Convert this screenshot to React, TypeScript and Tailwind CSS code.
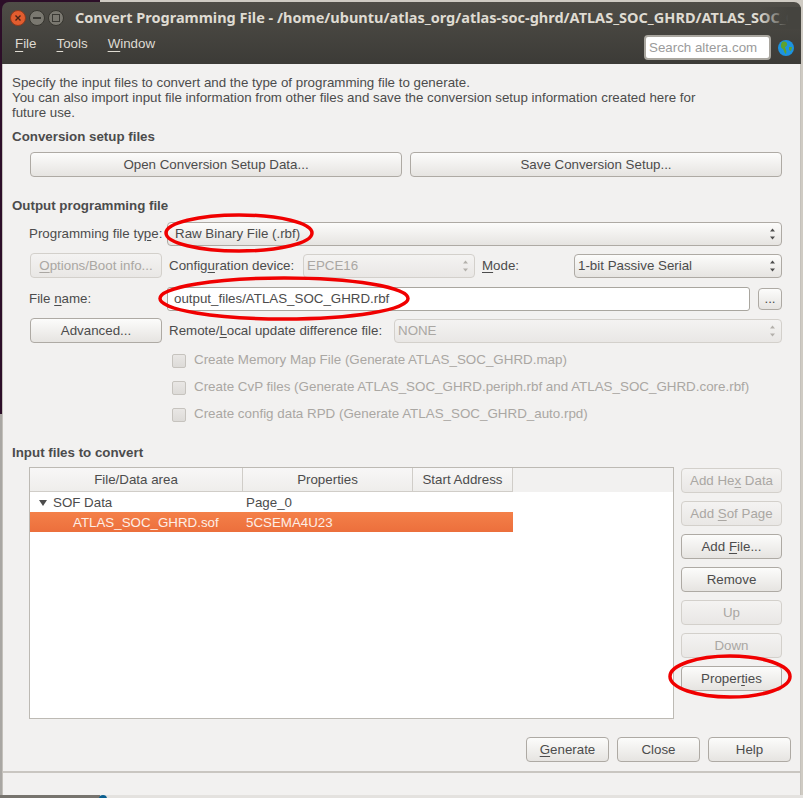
import type { ReactNode } from 'react'

const ui = "font-['Liberation_Sans',Arial,sans-serif]"

function Btn({ children, disabled, className = '' }: { children: ReactNode; disabled?: boolean; className?: string }) {
  return (
    <button
      disabled={disabled}
      className={`h-[25px] shrink-0 rounded-[4px] border text-[13.33px] leading-none bg-linear-to-b ${
        disabled
          ? 'border-[#d3d0cb] from-[#f4f3f2] to-[#e9e7e5] text-[#aaa7a3]'
          : 'border-[#aeaaa4] from-[#fcfcfb] to-[#e6e4e1] text-[#4c4c4c]'
      } ${className}`}
    >
      {children}
    </button>
  )
}

function Spin({ faded }: { faded?: boolean }) {
  const c = faded ? '#b3b0ab' : '#4c4c4c'
  return (
    <svg width="7" height="14" viewBox="0 0 7 14" className="shrink-0">
      <path d="M3.5 1.5 L6 4.5 L1 4.5 Z" fill={c} />
      <path d="M3.5 12.5 L6 9.5 L1 9.5 Z" fill={c} />
    </svg>
  )
}

function Select({ value, disabled, className = '' }: { value: string; disabled?: boolean; className?: string }) {
  return (
    <div
      className={`h-[24px] flex items-center justify-between pl-[3px] pr-[5px] rounded-[4px] border text-[13.33px] bg-linear-to-b ${
        disabled
          ? 'border-[#d3d0cb] from-[#f4f3f2] to-[#e9e7e5] text-[#aaa7a3]'
          : 'border-[#aeaaa4] from-[#fcfcfb] to-[#e6e4e1] text-[#4c4c4c]'
      } ${className}`}
    >
      <span>{value}</span>
      <Spin faded={disabled} />
    </div>
  )
}

function Check({ label }: { label: string }) {
  return (
    <div className="flex items-center h-[15px] pl-[160px] text-[13.38px] text-[#aaa7a3]">
      <span className="w-[14px] h-[14px] rounded-[2px] border border-[#c6c3be] bg-linear-to-b from-[#e9e7e5] to-[#dddbd8]" />
      <span className="ml-[8px]">{label}</span>
    </div>
  )
}

function Ring({ className, w, h }: { className: string; w: number; h: number }) {
  return (
    <svg width={w} height={h} viewBox={`0 0 ${w} ${h}`} className={`absolute pointer-events-none ${className}`}>
      <ellipse cx={w / 2} cy={h / 2} rx={w / 2 - 2} ry={h / 2 - 2} fill="none" stroke="#f00000" strokeWidth="3.5" />
    </svg>
  )
}

export default function App() {
  return (
    <div className={`${ui} relative w-[803px] h-[798px] overflow-hidden bg-[#cfcbc3] pt-[2px] px-[2px] pb-[3px]`}>
      {/* desktop behind the window */}
      <div className="absolute left-0 top-0 w-[100px] h-[10px] bg-[#2c0e28]" />
      <div className="absolute left-0 top-0 w-[3px] h-[414px] bg-[#2c0e28]" />
      <div className="absolute left-0 top-[414px] w-[3px] h-[384px] bg-[#a9a7a3]" />
      <div className="absolute left-0 bottom-0 w-[100px] h-[3px] bg-[#77746e]" />
      <div className="absolute left-[100px] bottom-0 right-0 h-[3px] bg-[#e4e2df]" />
      <div className="absolute left-[99px] bottom-[-5px] w-[8px] h-[8px] rounded-full bg-[#0b5f8f]" />

      <div className="relative h-full flex flex-col rounded-t-[7px] overflow-hidden">
        {/* title + menu */}
        <div className="h-[62px] shrink-0 bg-linear-to-b from-[#4f4d47] to-[#3c3b37]">
          <div className="h-[32px] flex items-center pl-[8px]">
            <span className="w-[16px] h-[16px] rounded-full bg-[#e25d2f] border border-[#8f3a1d] flex items-center justify-center">
              <svg width="8" height="8" viewBox="0 0 8 8"><path d="M1.5 1.5 L6.5 6.5 M6.5 1.5 L1.5 6.5" stroke="#4a2416" strokeWidth="1.4" /></svg>
            </span>
            <span className="ml-[3px] w-[16px] h-[16px] rounded-full bg-[#7a7870] border border-[#36352f] flex items-center justify-center">
              <span className="w-[8px] h-[1.5px] bg-[#3a3934]" />
            </span>
            <span className="ml-[3px] w-[16px] h-[16px] rounded-full bg-[#7a7870] border border-[#36352f] flex items-center justify-center">
              <span className="w-[8px] h-[8px] border border-[#3a3934]" />
            </span>
            <div className="relative ml-[11px] flex-1 min-w-0 whitespace-nowrap font-['Noto_Sans',sans-serif] font-bold text-[14.5px] text-[#dfdbd2]">
              Convert Programming File - /home/ubuntu/atlas_org/atlas-soc-ghrd/ATLAS_SOC_GHRD/ATLAS_SOC_G
              <span className="absolute right-0 top-0 bottom-0 w-[42px] bg-linear-to-r from-transparent to-[#45443f] to-70%" />
            </div>
          </div>
          <div className="h-[30px] flex items-start text-[13.33px] text-[#dfdbd2]">
            <div className="pl-[13px] flex gap-[20px]">
              <span><u className="underline-offset-3">F</u>ile</span>
              <span><u className="underline-offset-3">T</u>ools</span>
              <span><u className="underline-offset-3">W</u>indow</span>
            </div>
            <div className="ml-auto mt-[1px] flex items-center pr-[7px]">
              <div className="w-[127px] h-[25px] rounded-[4px] border-2 border-[#a9a69f] bg-white pl-[3px] text-[13.33px] leading-[21px] text-[#9b9b9b]">
                Search altera.com
              </div>
              <svg width="16" height="16" viewBox="0 0 16 16" className="ml-[7px]">
                <circle cx="8" cy="8" r="8" fill="#1c93e0" />
                <path d="M4 2 C7 1 9 2 9 4 C10 6 7 6 7 8 C8 10 9 11 8 14 C6 13 6 10 5 9 C3 8 2 6 4 2 Z" fill="#5fa22c" />
                <path d="M11 7 L14 7 L13 11 L11 10 Z" fill="#5fa22c" />
              </svg>
            </div>
          </div>
        </div>

        {/* dialog body */}
        <div className="flex-1 min-h-0 flex flex-col bg-[#f2f1f0] border-x border-[#c4c1bb] text-[#4c4c4c] text-[13.33px]">
          <div className="flex-1 min-h-0 pl-[9px] pr-[9px] pt-[11px]">
            <p className="leading-[15px]">
              Specify the input files to convert and the type of programming file to generate.
              <br />
              You can also import input file information from other files and save the conversion setup information created here for
              <br />
              future use.
            </p>

            <h3 className="mt-[9px] font-bold leading-[15px]">Conversion setup files</h3>
            <div className="mt-[8px] ml-[18px] flex gap-[8px]">
              <Btn className="w-[372px]">Open Conversion Setup Data...</Btn>
              <Btn className="w-[372px]">Save Conversion Setup...</Btn>
            </div>

            <h3 className="mt-[21px] font-bold leading-[15px]">Output programming file</h3>

            <div className="mt-[9px] ml-[18px] flex flex-col gap-[7px]">
              <div className="relative flex items-center">
                <span className="w-[138px] -ml-[1px]">Programming file ty<u className="underline-offset-2">p</u>e:</span>
                <Select value="Raw Binary File (.rbf)" className="w-[615px] pl-[7px]!" />
                <Ring className="left-[134px] top-[-9px]" w={150} h={40} />
              </div>
              <div className="flex items-center">
                <Btn disabled className="w-[132px]"><u className="underline-offset-2">O</u>ptions/Boot info...</Btn>
                <span className="ml-[7px] w-[134px]">Config<u className="underline-offset-2">u</u>ration device:</span>
                <Select disabled value="EPCE16" className="w-[172px]" />
                <span className="ml-[7px] w-[92px]"><u className="underline-offset-2">M</u>ode:</span>
                <Select value="1-bit Passive Serial" className="w-[208px]" />
              </div>
              <div className="relative flex items-center h-[25px] mt-[1px]">
                <span className="w-[138px] -ml-[1px]">File <u className="underline-offset-2">n</u>ame:</span>
                <div className="w-[583px] h-[24px] rounded-[3px] border border-[#a9a69f] bg-white pl-[6px] leading-[22px]">
                  output_files/ATLAS_SOC_GHRD.rbf
                </div>
                <Btn className="ml-[8px] w-[24px] h-[22px]!">...</Btn>
                <Ring className="left-[128px] top-[-10px]" w={252} h={45} />
              </div>
              <div className="flex items-center">
                <Btn className="w-[132px]">Advanced...</Btn>
                <span className="ml-[7px] w-[225px]">Remote/<u className="underline-offset-2">L</u>ocal update difference file:</span>
                <Select disabled value="NONE" className="w-[388px]" />
              </div>
            </div>

            <div className="mt-[10px] flex flex-col gap-[12px]">
              <Check label="Create Memory Map File (Generate ATLAS_SOC_GHRD.map)" />
              <Check label="Create CvP files (Generate ATLAS_SOC_GHRD.periph.rbf and ATLAS_SOC_GHRD.core.rbf)" />
              <Check label="Create config data RPD (Generate ATLAS_SOC_GHRD_auto.rpd)" />
            </div>

            <h3 className="mt-[23px] font-bold leading-[15px]">Input files to convert</h3>

            <div className="mt-[7px] ml-[17px] flex">
              <div className="w-[645px] h-[252px] border border-[#bdbab4] bg-white">
                <div className="h-[24px] flex bg-linear-to-b from-[#f8f7f7] to-[#eeedeb]">
                  <div className="w-[213px] pt-[1px] flex items-center justify-center border-r border-b border-[#d0cdc8]">File/Data area</div>
                  <div className="w-[170px] pt-[1px] flex items-center justify-center border-r border-b border-[#d0cdc8]">Properties</div>
                  <div className="w-[100px] pt-[1px] flex items-center justify-center border-r border-b border-[#d0cdc8]">Start Address</div>
                  <div className="flex-1 bg-[#f2f1f0]" />
                </div>
                <div className="w-[483px] h-[20px] pt-[1px] flex items-center">
                  <div className="w-[216px] flex items-center pl-[8px]">
                    <svg width="10" height="8" viewBox="0 0 10 8"><path d="M1 1 L9 1 L5 7 Z" fill="#4c4c4c" /></svg>
                    <span className="ml-[5px]">SOF Data</span>
                  </div>
                  <span>Page_0</span>
                </div>
                <div className="w-[483px] h-[20px] pt-[1px] flex items-center bg-linear-to-b from-[#f48049] to-[#ec6f3c] text-[#fdeee6]">
                  <span className="w-[216px] pl-[43px]">ATLAS_SOC_GHRD.sof</span>
                  <span>5CSEMA4U23</span>
                </div>
              </div>
              <div className="ml-[7px] flex flex-col gap-[8px] pt-[1px]">
                <Btn disabled className="w-[101px]">Add He<u className="underline-offset-2">x</u> Data</Btn>
                <Btn disabled className="w-[101px]">Add <u className="underline-offset-2">S</u>of Page</Btn>
                <Btn className="w-[101px]">Add <u className="underline-offset-2">F</u>ile...</Btn>
                <Btn className="w-[101px]">Remove</Btn>
                <Btn disabled className="w-[101px]">Up</Btn>
                <Btn disabled className="w-[101px]">Down</Btn>
                <div className="relative">
                  <Btn className="w-[101px]">Proper<u className="underline-offset-2">t</u>ies</Btn>
                  <Ring className="left-[-13px] top-[-12px]" w={124} h={45} />
                </div>
              </div>
            </div>

            <div className="mt-[18px] flex justify-end gap-[8px]">
              <Btn className="w-[83px]"><u className="underline-offset-2">G</u>enerate</Btn>
              <Btn className="w-[83px]">Close</Btn>
              <Btn className="w-[83px]">Help</Btn>
            </div>
          </div>

          <div className="h-[24px] shrink-0 border-t-2 border-[#c9c6c1] bg-[#f2f1f0]" />
        </div>
      </div>
    </div>
  )
}
